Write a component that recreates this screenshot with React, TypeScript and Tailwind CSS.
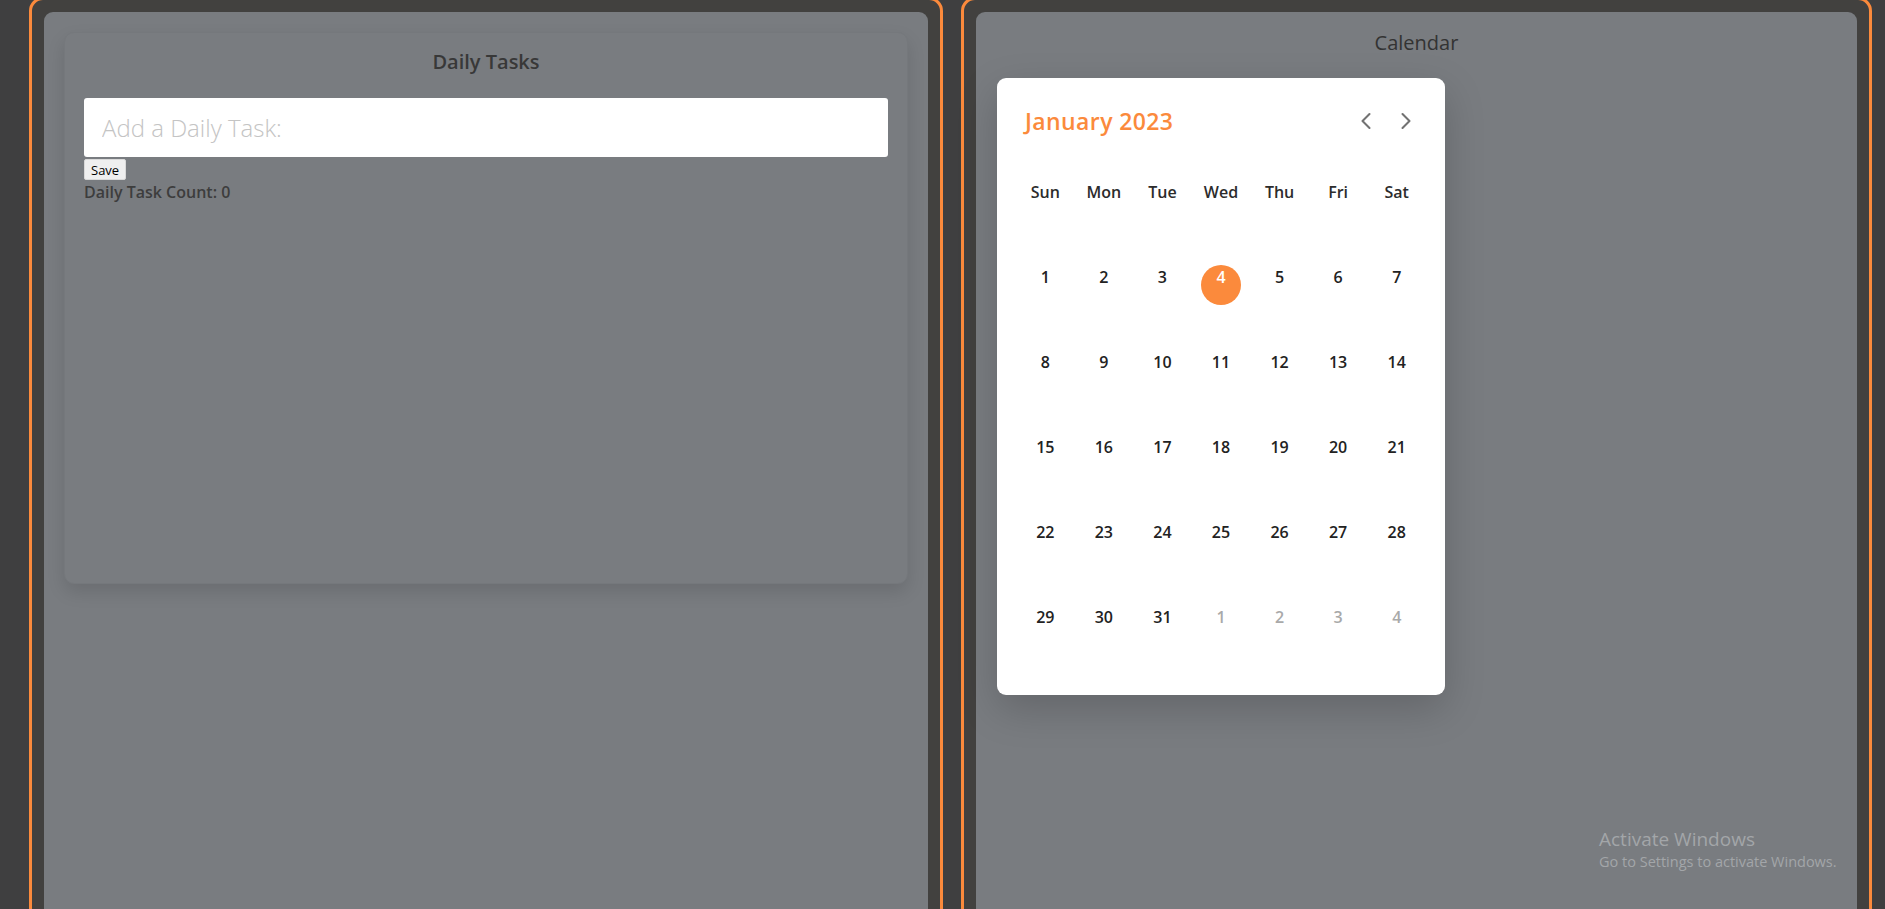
import { ChevronLeft, ChevronRight } from "lucide-react";

const WEEKDAYS = ["Sun", "Mon", "Tue", "Wed", "Thu", "Fri", "Sat"];

type Day = { d: number; out?: boolean; selected?: boolean };

function buildDays(): Day[] {
  const days: Day[] = [];
  for (let i = 1; i <= 31; i++) days.push({ d: i, selected: i === 4 });
  for (let i = 1; i <= 4; i++) days.push({ d: i, out: true });
  return days;
}

function Calendar() {
  const days = buildDays();
  return (
    <div className="w-[448px] rounded-[9px] bg-white px-[19px] pt-[29px] pb-[5px] shadow-[0_14px_40px_rgba(0,0,0,0.18)]">
      <div className="mb-[45px] flex h-[28px] items-center justify-between">
        <span className="pl-[9px] text-[23px] font-semibold leading-7 tracking-[0.4px] text-[#fb8a3c]">January 2023</span>
        <div className="flex">
          <button className="flex h-[28px] w-[40px] items-center justify-center text-[#727272]">
            <ChevronLeft size={28} strokeWidth={1.8} />
          </button>
          <button className="flex h-[28px] w-[40px] items-center justify-center text-[#727272]">
            <ChevronRight size={28} strokeWidth={1.8} />
          </button>
        </div>
      </div>
      <div className="grid grid-cols-7">
        {WEEKDAYS.map((w) => (
          <div key={w} className="flex h-[85px] justify-center">
            <span className="text-[16px] font-semibold leading-6 text-[#2c2c2c]">{w}</span>
          </div>
        ))}
        {days.map((day, i) => (
          <div key={i} className="flex h-[85px] justify-center">
            <div
              className={
                day.selected
                  ? "flex h-[40px] w-[40px] justify-center rounded-full bg-[#fb8a3c] text-white"
                  : day.out
                  ? "flex h-[40px] w-[40px] justify-center text-[#a9a9a9]"
                  : "flex h-[40px] w-[40px] justify-center text-[#222222]"
              }
            >
              <span className="text-[16px] font-semibold leading-6">{day.d}</span>
            </div>
          </div>
        ))}
      </div>
    </div>
  );
}

export default function App() {
  return (
    <div className="relative h-[909px] w-full overflow-hidden bg-[#3f3f40] font-['Open_Sans','Noto_Sans',sans-serif]">
      <div className="-mt-[3px] grid grid-cols-[914px_911px] gap-[18px] pl-[29px]">
        <section className="h-[940px] rounded-[14px] border-[3px] border-[#fb8a3c] bg-[#42413f] p-[12px]">
          <div className="h-full rounded-[9px] bg-[#797c80] px-[20px] pt-[20px]">
            <div className="h-[552px] rounded-[10px] border border-[#75787c] bg-[#797c80] px-[19px] pt-[17px] shadow-[0_8px_18px_rgba(0,0,0,0.12)]">
              <h2 className="text-center text-[20px] font-semibold leading-6 text-[#383838]">Daily Tasks</h2>
              <input
                className="mt-[24px] block h-[59px] w-full rounded-[3px] bg-white px-[18px] text-[24px] font-light text-[#333] outline-none placeholder:text-[#c4c4c4]"
                placeholder="Add a Daily Task:"
              />
              <button className="mt-[2px] block h-[21px] rounded-[2px] border border-[#d9d9d9] bg-[#efefef] px-[6px] text-[13px] leading-4 text-black">
                Save
              </button>
              <p className="text-[16px] font-semibold leading-6 text-[#3d3d3d]">Daily Task Count: 0</p>
            </div>
          </div>
        </section>
        <section className="h-[940px] rounded-[14px] border-[3px] border-[#fb8a3c] bg-[#42413f] p-[12px]">
          <div className="h-full rounded-[9px] bg-[#797c80] px-[21px] pt-[19px]">
            <h2 className="text-center text-[20px] font-medium leading-6 text-[#333333]">Calendar</h2>
            <div className="mt-[23px]">
              <Calendar />
            </div>
          </div>
        </section>
      </div>
      <div className="absolute left-[1599px] top-[826px] text-[#a3a6a9]">
        <div className="text-[19px] leading-[26px]">Activate Windows</div>
        <div className="text-[14.5px] leading-[20px]">Go to Settings to activate Windows.</div>
      </div>
    </div>
  );
}
